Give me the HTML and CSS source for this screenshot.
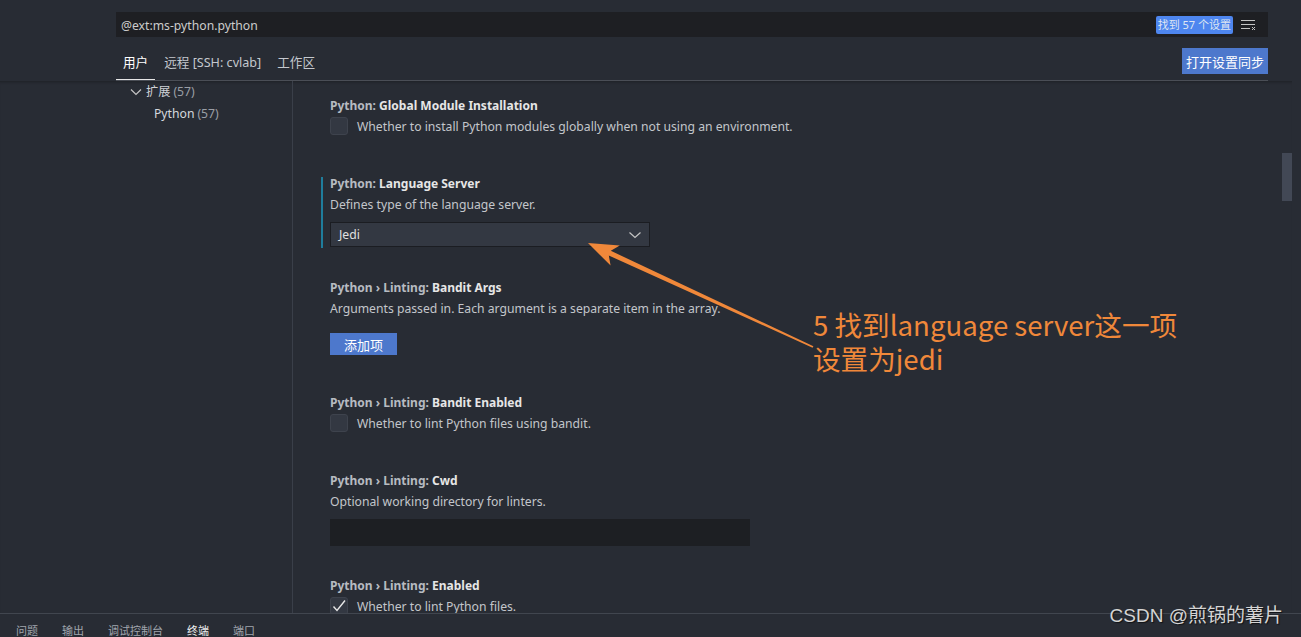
FILE: index.html
```html
<!DOCTYPE html>
<html lang="zh-CN">
<head>
    <meta charset="UTF-8">
    <title>设置 - Python</title>
    <link rel="stylesheet" href="styles.css">
</head>
<body>
    <div class="workbench">
        <div class="settings-editor">
            <div class="header">
                <div class="search">
                    <span class="query">@ext:ms-python.python</span>
                    <span class="count">找到 57 个设置</span>
                    <svg class="filter-icon" width="16" height="14" viewBox="0 0 16 14">
                        <path d="M1 2.5h14M1 6.5h14M1 10.5h9" stroke="#c5c5c5" stroke-width="1.2" fill="none"/>
                        <path d="M12 9l3 3M15 9l-3 3" stroke="#c5c5c5" stroke-width="1" fill="none"/>
                    </svg>
                </div>
                <div class="tabs-row">
                    <div class="tabs">
                        <span class="tab active">用户</span>
                        <span class="tab">远程 [SSH: cvlab]</span>
                        <span class="tab">工作区</span>
                    </div>
                    <button class="sync-btn">打开设置同步</button>
                </div>
            </div>

            <div class="body">
                <div class="toc">
                    <div class="toc-row group">
                        <svg class="chev" width="12" height="8" viewBox="0 0 12 8"><path d="M1 1.5l5 5 5-5" stroke="#c5c5c5" stroke-width="1.2" fill="none"/></svg>
                        <span>扩展</span><span class="num">(57)</span>
                    </div>
                    <div class="toc-row sub">Python<span class="num">(57)</span></div>
                </div>

                <div class="list">
                    <div class="setting">
                        <div class="title"><span class="cat">Python: </span>Global Module Installation</div>
                        <div class="bool-row"><span class="checkbox"></span>Whether to install Python modules globally when not using an environment.</div>
                    </div>

                    <div class="setting focused field">
                        <div class="title"><span class="cat">Python: </span>Language Server</div>
                        <div class="desc">Defines type of the language server.</div>
                        <div class="select">
                            <span>Jedi</span>
                            <svg width="14" height="8" viewBox="0 0 14 8"><path d="M1.5 1.5l5.5 5 5.5-5" stroke="#c5c5c5" stroke-width="1.2" fill="none"/></svg>
                        </div>
                    </div>

                    <div class="setting">
                        <div class="title"><span class="cat">Python › Linting: </span>Bandit Args</div>
                        <div class="desc">Arguments passed in. Each argument is a separate item in the array.</div>
                        <button class="add-btn">添加项</button>
                    </div>

                    <div class="setting">
                        <div class="title"><span class="cat">Python › Linting: </span>Bandit Enabled</div>
                        <div class="bool-row"><span class="checkbox"></span>Whether to lint Python files using bandit.</div>
                    </div>

                    <div class="setting field tight">
                        <div class="title"><span class="cat">Python › Linting: </span>Cwd</div>
                        <div class="desc">Optional working directory for linters.</div>
                        <div class="text-input"></div>
                    </div>

                    <div class="setting">
                        <div class="title"><span class="cat">Python › Linting: </span>Enabled</div>
                        <div class="bool-row">
                            <span class="checkbox">
                                <svg width="16" height="16" viewBox="0 0 16 16"><path d="M2.5 8.5l3.5 4 8-10" stroke="#e8e8e8" stroke-width="1.4" fill="none"/></svg>
                            </span>Whether to lint Python files.
                        </div>
                    </div>
                </div>
                <div class="scroll-thumb"></div>
            </div>
        </div>

        <div class="panel">
            <span class="panel-tab">问题</span>
            <span class="panel-tab">输出</span>
            <span class="panel-tab">调试控制台</span>
            <span class="panel-tab active">终端</span>
            <span class="panel-tab">端口</span>
        </div>
    </div>

    <svg class="arrow" width="1301" height="637" viewBox="0 0 1301 637">
        <polygon points="588,243 619.8,245.6 610.8,250.8 813.4,346.3 812.6,347.7 608.8,255.4 610.6,265.6" fill="#f0883a"/>
    </svg>
    <div class="note">
        <div>5 找到language server这一项</div>
        <div>设置为jedi</div>
    </div>
    <div class="watermark">CSDN @煎锅的薯片</div>
</body>
</html>
```

FILE: styles.css
```css
body {
    margin: 0;
    width: 1301px;
    height: 637px;
    overflow: hidden;
    background: #282c34;
    font-family: 'Noto Sans', 'Noto Sans CJK SC', sans-serif;
    font-size: 12.2px;
    color: #d7dae0;
    position: relative;
}
.workbench {
    display: flex;
    flex-direction: column;
    height: 637px;
}
.settings-editor {
    height: 613px;
    display: flex;
    flex-direction: column;
}
.header {
    margin-left: 116px;
    width: 1152px;
}
.search {
    margin-top: 12px;
    height: 25px;
    background: #1e1f23;
    display: flex;
    align-items: center;
    padding-left: 5px;
    padding-right: 12px;
}
.query {
    flex: 1;
    color: #cccccc;
    padding-top: 1px;
}
.count {
    background: #4e86ef;
    color: #dfe6f2;
    font-size: 11px;
    height: 18px;
    line-height: 18px;
    padding: 0 2px;
    border-radius: 2px;
    margin-right: 7px;
}
.filter-icon {
    display: block;
}
.tabs-row {
    height: 43px;
    display: flex;
    justify-content: space-between;
    border-bottom: 1px solid #4a4e56;
}
.tabs {
    display: flex;
    align-items: flex-end;
}
.tab {
    line-height: 18px;
    padding: 8px 7px 7px;
    margin-right: 2px;
    border-bottom: 1px solid transparent;
    color: #c4c8ce;
    font-size: 12.6px;
}
.tab.active {
    color: #ffffff;
    border-bottom-color: #e6e6e6;
}
.sync-btn {
    margin-top: 11px;
    height: 26px;
    padding: 0 4px;
    border: none;
    background: #4d78cc;
    color: #ffffff;
    font-family: inherit;
    font-size: 13px;
}
.body {
    flex: 1;
    display: flex;
    position: relative;
    overflow: hidden;
    width: 1292px;
    box-shadow: inset 0 3px 3px -2px #1e2126;
}
.toc {
    margin-left: 116px;
    width: 176px;
    border-right: 1px solid #3a3f49;
    flex-shrink: 0;
}
.toc-row {
    height: 22px;
    line-height: 22px;
    white-space: nowrap;
}
.toc-row.group {
    display: flex;
    align-items: center;
    padding-left: 14px;
    color: #cfd2d7;
}
.chev {
    margin-right: 4px;
}
.toc-row.sub {
    padding-left: 38px;
    color: #d4d8de;
}
.num {
    color: #9a9ea5;
    margin-left: 3px;
}
.list {
    padding: 14px 0 0 28px;
    flex: 1;
}
.setting {
    position: relative;
    border-left: 2px solid transparent;
    padding: 0 0 37px 7px;
}
.setting.field {
    padding-bottom: 30px;
}
.setting.tight {
    padding-bottom: 29px;
}
.setting.focused::before {
    content: "";
    position: absolute;
    left: -2px;
    top: 4px;
    bottom: 29px;
    width: 2px;
    background: #1f7d9c;
}
.title {
    line-height: 20px;
    padding-top: 1px;
    font-weight: bold;
    font-size: 12px;
    color: #e6e6e6;
}
.cat {
    color: #b7bbc1;
}
.desc {
    line-height: 20px;
    margin-top: 1px;
    color: #c3c6cb;
}
.bool-row {
    display: flex;
    align-items: center;
    height: 20px;
    color: #c3c6cb;
}
.checkbox {
    width: 16px;
    height: 16px;
    border: 1px solid #3e434d;
    background: #333842;
    border-radius: 3px;
    margin-right: 9px;
    display: flex;
    align-items: center;
    justify-content: center;
}
.select {
    margin-top: 7px;
    width: 320px;
    height: 25px;
    box-sizing: border-box;
    border: 1px solid #1b1d22;
    background: #333842;
    display: flex;
    align-items: center;
    justify-content: space-between;
    padding: 0 7px 0 8px;
    color: #e0e0e0;
}
.add-btn {
    display: block;
    margin-top: 14px;
    width: 67px;
    height: 22px;
    border: none;
    background: #4d78cc;
    color: #ffffff;
    font-family: inherit;
    font-size: 13px;
    padding: 0;
}
.text-input {
    margin-top: 7px;
    width: 420px;
    height: 27px;
    background: #1d1f23;
}
.scroll-thumb {
    position: absolute;
    left: 1282px;
    top: 72px;
    width: 10px;
    height: 48px;
    background: #424855;
}
.panel {
    height: 23px;
    border-top: 1px solid #41464f;
    padding-left: 16px;
    display: flex;
    gap: 24px;
}
.panel-tab {
    font-size: 11px;
    line-height: 14px;
    padding-top: 10px;
    color: #a0a5ad;
}
.panel-tab.active {
    color: #eeeeee;
}
.arrow {
    position: absolute;
    left: 0;
    top: 0;
    pointer-events: none;
}
.note {
    position: absolute;
    left: 813px;
    top: 307px;
    font-size: 27.6px;
    line-height: 34px;
    color: #f0883a;
    font-family: 'Noto Sans CJK SC', sans-serif;
    white-space: nowrap;
}
.watermark {
    position: absolute;
    right: 18px;
    top: 603px;
    font-size: 19px;
    line-height: 26px;
    color: #d4d4d4;
    text-shadow: 1px 1px 1px rgba(0, 0, 0, 0.6);
    font-family: 'Liberation Sans', 'Noto Sans CJK SC', sans-serif;
}
```
